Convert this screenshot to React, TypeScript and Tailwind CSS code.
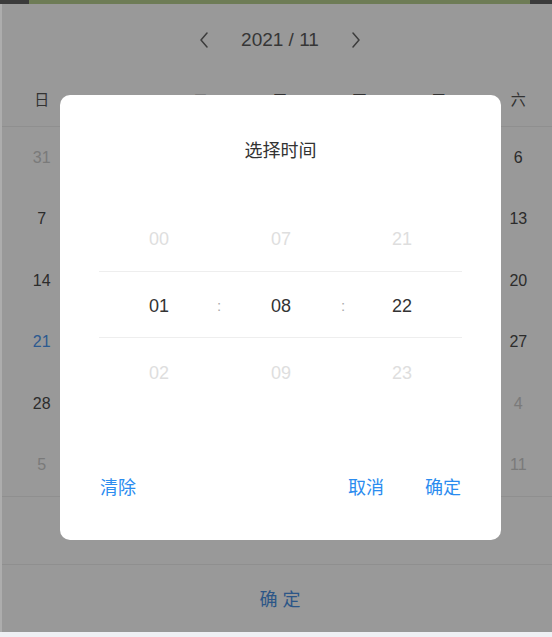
import React from "react";

const weeks: { d: number; muted?: boolean; active?: boolean }[][] = [
  [{ d: 31, muted: true }, { d: 1 }, { d: 2 }, { d: 3 }, { d: 4 }, { d: 5 }, { d: 6 }],
  [{ d: 7 }, { d: 8 }, { d: 9 }, { d: 10 }, { d: 11 }, { d: 12 }, { d: 13 }],
  [{ d: 14 }, { d: 15 }, { d: 16 }, { d: 17 }, { d: 18 }, { d: 19 }, { d: 20 }],
  [{ d: 21, active: true }, { d: 22 }, { d: 23 }, { d: 24 }, { d: 25 }, { d: 26 }, { d: 27 }],
  [{ d: 28 }, { d: 29 }, { d: 30 }, { d: 1, muted: true }, { d: 2, muted: true }, { d: 3, muted: true }, { d: 4, muted: true }],
  [{ d: 5, muted: true }, { d: 6, muted: true }, { d: 7, muted: true }, { d: 8, muted: true }, { d: 9, muted: true }, { d: 10, muted: true }, { d: 11, muted: true }],
];

const weekdays = ["日", "一", "二", "三", "四", "五", "六"];

function PickerRow({ values, selected }: { values: string[]; selected?: boolean }) {
  const color = selected ? "text-[#333333]" : "text-[#dedede]";
  return (
    <div className={`flex h-[67px] items-center pt-[3px] text-[18px] ${color} ${selected ? "border-y border-[#eeeeee]" : ""}`}>
      <div className="flex w-[120px] justify-center">{values[0]}</div>
      <div className="flex w-0 justify-center text-[15px] text-[#aaaaaa]">{selected ? ":" : ""}</div>
      <div className="flex w-[124px] justify-center">{values[1]}</div>
      <div className="flex w-0 justify-center text-[15px] text-[#aaaaaa]">{selected ? ":" : ""}</div>
      <div className="flex w-[118px] justify-center">{values[2]}</div>
    </div>
  );
}

export default function App() {
  return (
    <div className="h-[637px] w-[552px] overflow-hidden bg-[#adadad] font-['Liberation_Sans','Noto_Sans_CJK_SC',sans-serif]">
      <div className="flex h-[4px] w-full">
        <div className="w-[29px] bg-[#3b3b3b]" />
        <div className="flex-1 bg-[#6e7c56]" />
        <div className="w-[22px] bg-[#3b3b3b]" />
      </div>
      <div className="flex h-[628px]">
        <div className="w-[2px] shrink-0" />
        <div className="relative w-[556px] shrink-0 bg-white">
          {/* header */}
          <div className="flex h-[70px] items-center justify-center gap-[32px] pt-[2px]">
            <svg width="10" height="16" viewBox="0 0 10 16" fill="none">
              <polyline points="8,1 2,8 8,15" stroke="#666666" strokeWidth="1.5" strokeLinecap="round" strokeLinejoin="round" />
            </svg>
            <span className="text-[19px] text-[#5a5a5a]">2021 / 11</span>
            <svg width="10" height="16" viewBox="0 0 10 16" fill="none">
              <polyline points="2,1 8,8 2,15" stroke="#666666" strokeWidth="1.5" strokeLinecap="round" strokeLinejoin="round" />
            </svg>
          </div>
          {/* weekdays */}
          <div className="grid h-[53px] grid-cols-7 items-center border-b border-[#eeeeee] text-[15px] text-[#555555]">
            {weekdays.map((w) => (
              <div key={w} className="text-center">
                {w}
              </div>
            ))}
          </div>
          {/* dates */}
          <div className="border-b border-[#eeeeee]">
            {weeks.map((row, i) => (
              <div key={i} className="grid h-[61.5px] grid-cols-7 items-center text-[16px]">
                {row.map((c, j) => (
                  <div
                    key={j}
                    className={`text-center ${c.active ? "text-[#4a96f0]" : c.muted ? "text-[#cccccc]" : "text-[#4a4a4a]"}`}
                  >
                    {c.d}
                  </div>
                ))}
              </div>
            ))}
          </div>
          <div className="h-[67px]" />
          <div className="flex h-[68px] items-center justify-center border-t border-[#eeeeee] pt-[4px] text-[18px] text-[#4a90e2]">
            确 定
          </div>

          {/* overlay */}
          <div className="absolute inset-0 bg-black/40" />

          {/* modal */}
          <div className="absolute left-[58px] top-[91px] flex h-[445px] w-[441px] flex-col rounded-[10px] bg-white pt-[44px]">
            <div className="text-center text-[18px] leading-[24px] text-[#333333]">选择时间</div>
            <div className="mx-[39px] mt-[41px]">
              <PickerRow values={["00", "07", "21"]} />
              <PickerRow values={["01", "08", "22"]} selected />
              <PickerRow values={["02", "09", "23"]} />
            </div>
            <div className="mt-[71px] flex px-[40px] text-[18px] leading-[24px] text-[#2b8cef]">
              <span>清除</span>
              <span className="flex-1" />
              <span>取消</span>
              <span className="ml-[41px]">确定</span>
            </div>
          </div>
        </div>
      </div>
      <div className="h-[5px] bg-[#eff0f4]" />
    </div>
  );
}
